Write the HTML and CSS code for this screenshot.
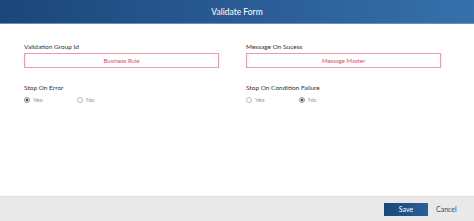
FILE: index.html
```html
<!DOCTYPE html>
<html lang="en">
<head>
    <meta charset="UTF-8">
    <meta name="viewport" content="width=device-width, initial-scale=1.0">
    <title>Validate Form</title>
    <link rel="stylesheet" href="styles.css">
</head>
<body>
    <div class="header">Validate Form</div>

    <div class="form">
        <div class="field">
            <label class="label">Validation Group Id</label>
            <div class="select">Business Rule</div>
        </div>
        <div class="field">
            <label class="label">Message On Sucess</label>
            <div class="select">Message Master</div>
        </div>
        <div class="field">
            <label class="label">Stop On Error</label>
            <div class="radios">
                <span class="radio checked"><i></i>Yes</span>
                <span class="radio"><i></i>No</span>
            </div>
        </div>
        <div class="field">
            <label class="label">Stop On Condition Failure</label>
            <div class="radios">
                <span class="radio"><i></i>Yes</span>
                <span class="radio checked"><i></i>No</span>
            </div>
        </div>
    </div>

    <div class="footer">
        <button class="btn save">Save</button>
        <button class="btn cancel">Cancel</button>
    </div>
</body>
</html>
```

FILE: styles.css
```css
/* Modal-like layout filling the window */
body {
    display: flex;
    flex-direction: column;
    height: 100vh;
    margin: 0;
    background-color: #fff;
    font-family: "Lato", "Open Sans", sans-serif;
    color: #333;
}

.header {
    height: 24px;
    line-height: 24px;
    text-align: center;
    font-size: 8.5px;
    color: #fff;
    background: linear-gradient(to right, #1b4679, #2b5d97 55%, #3670ab);
    border-bottom: 1px solid #6a8fb8;
    box-sizing: border-box;
}

.form {
    display: grid;
    grid-template-columns: 222px 222px;
    row-gap: 16px;
    padding: 19px 0 0 24px;
}

.label {
    display: block;
    font-size: 6.5px;
    height: 8px;
    line-height: 8px;
    margin-bottom: 2px;
    color: #333;
}

.select {
    width: 195px;
    height: 15px;
    line-height: 13px;
    border: 1px solid #ee9aaa;
    box-sizing: border-box;
    text-align: center;
    font-size: 6px;
    color: #e24a64;
}

.radios {
    display: flex;
    margin-top: 3px;
    font-size: 6.5px;
    color: #999;
}

.radio {
    display: flex;
    align-items: center;
    width: 53px;
    height: 9px;
}

.radio i {
    width: 4px;
    height: 4px;
    border: 1px solid #bbb;
    border-radius: 50%;
    margin-right: 3px;
    box-sizing: content-box;
    background: #fff;
}

.radio.checked i {
    background: radial-gradient(circle, #555 45%, #fff 60%);
    border-color: #999;
}

.footer {
    margin-top: auto;
    height: 25px;
    display: flex;
    align-items: center;
    justify-content: flex-end;
    padding-right: 14px;
    background-color: #e9e9e9;
    border-top: 1px solid #dcdcdc;
    box-sizing: border-box;
}

.btn {
    font-family: "Lato", sans-serif;
    font-size: 7px;
    border: none;
    cursor: pointer;
}

.btn.save {
    width: 44px;
    height: 13px;
    color: #fff;
    background: linear-gradient(to right, #1b4679, #2c5f98);
    margin-right: 2px;
}

.btn.cancel {
    width: 30px;
    height: 13px;
    background: none;
    color: #2a4f7a;
}
```
